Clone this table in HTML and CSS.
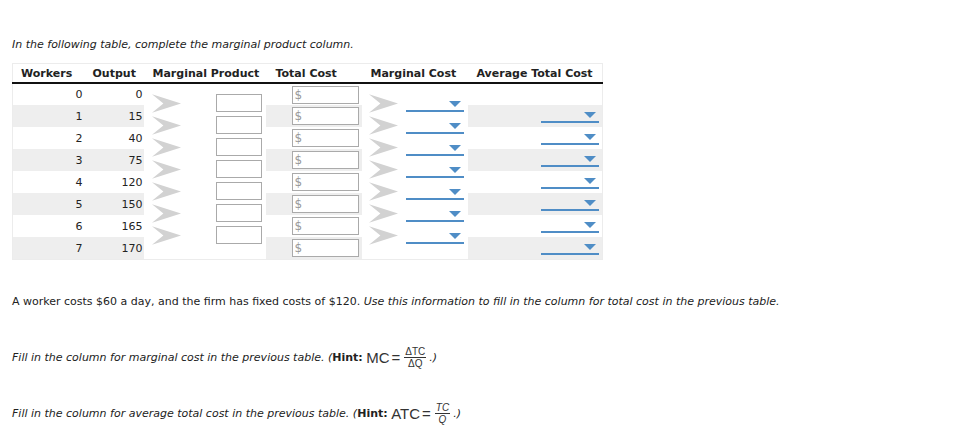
FILE: index.html
```html
<!DOCTYPE html>
<html>
<head>
<meta charset="utf-8">
<link rel="stylesheet" href="styles.css">
</head>
<body>
<p class="intro"><i>In the following table, complete the marginal product column.</i></p>
<table class="grid">
  <colgroup>
    <col class="col-w"><col class="col-o"><col class="col-mp"><col class="col-tc"><col class="col-mc"><col class="col-atc">
  </colgroup>
  <thead>
    <tr>
      <th class="h-w">Workers</th>
      <th class="h-o">Output</th>
      <th class="h-mp">Marginal Product</th>
      <th class="h-tc">Total Cost</th>
      <th class="h-mc">Marginal Cost</th>
      <th class="h-atc">Average Total Cost</th>
    </tr>
  </thead>
  <tbody>
    <tr>
      <td class="num w">0</td><td class="num o">0</td>
      <td class="steps-cell mp" rowspan="8">
        <div class="steps">
          <div class="step"><svg class="arrow" viewBox="0 0 28 20"><polygon points="0,1 28,10 0,19 11,10"/></svg><span class="box"></span></div>
          <div class="step"><svg class="arrow" viewBox="0 0 28 20"><polygon points="0,1 28,10 0,19 11,10"/></svg><span class="box"></span></div>
          <div class="step"><svg class="arrow" viewBox="0 0 28 20"><polygon points="0,1 28,10 0,19 11,10"/></svg><span class="box"></span></div>
          <div class="step"><svg class="arrow" viewBox="0 0 28 20"><polygon points="0,1 28,10 0,19 11,10"/></svg><span class="box"></span></div>
          <div class="step"><svg class="arrow" viewBox="0 0 28 20"><polygon points="0,1 28,10 0,19 11,10"/></svg><span class="box"></span></div>
          <div class="step"><svg class="arrow" viewBox="0 0 28 20"><polygon points="0,1 28,10 0,19 11,10"/></svg><span class="box"></span></div>
          <div class="step"><svg class="arrow" viewBox="0 0 28 20"><polygon points="0,1 28,10 0,19 11,10"/></svg><span class="box"></span></div>
        </div>
      </td>
      <td class="tc"><span class="money">$</span></td>
      <td class="steps-cell mc" rowspan="8">
        <div class="steps">
          <div class="step"><svg class="arrow" viewBox="0 0 28 20"><polygon points="0,1 28,10 0,19 11,10"/></svg><span class="drop"><span class="tri"></span></span></div>
          <div class="step"><svg class="arrow" viewBox="0 0 28 20"><polygon points="0,1 28,10 0,19 11,10"/></svg><span class="drop"><span class="tri"></span></span></div>
          <div class="step"><svg class="arrow" viewBox="0 0 28 20"><polygon points="0,1 28,10 0,19 11,10"/></svg><span class="drop"><span class="tri"></span></span></div>
          <div class="step"><svg class="arrow" viewBox="0 0 28 20"><polygon points="0,1 28,10 0,19 11,10"/></svg><span class="drop"><span class="tri"></span></span></div>
          <div class="step"><svg class="arrow" viewBox="0 0 28 20"><polygon points="0,1 28,10 0,19 11,10"/></svg><span class="drop"><span class="tri"></span></span></div>
          <div class="step"><svg class="arrow" viewBox="0 0 28 20"><polygon points="0,1 28,10 0,19 11,10"/></svg><span class="drop"><span class="tri"></span></span></div>
          <div class="step"><svg class="arrow" viewBox="0 0 28 20"><polygon points="0,1 28,10 0,19 11,10"/></svg><span class="drop"><span class="tri"></span></span></div>
        </div>
      </td>
      <td class="atc"></td>
    </tr>
    <tr><td class="num w">1</td><td class="num o">15</td><td class="tc"><span class="money">$</span></td><td class="atc"><span class="drop"><span class="tri"></span></span></td></tr>
    <tr><td class="num w">2</td><td class="num o">40</td><td class="tc"><span class="money">$</span></td><td class="atc"><span class="drop"><span class="tri"></span></span></td></tr>
    <tr><td class="num w">3</td><td class="num o">75</td><td class="tc"><span class="money">$</span></td><td class="atc"><span class="drop"><span class="tri"></span></span></td></tr>
    <tr><td class="num w">4</td><td class="num o">120</td><td class="tc"><span class="money">$</span></td><td class="atc"><span class="drop"><span class="tri"></span></span></td></tr>
    <tr><td class="num w">5</td><td class="num o">150</td><td class="tc"><span class="money">$</span></td><td class="atc"><span class="drop"><span class="tri"></span></span></td></tr>
    <tr><td class="num w">6</td><td class="num o">165</td><td class="tc"><span class="money">$</span></td><td class="atc"><span class="drop"><span class="tri"></span></span></td></tr>
    <tr><td class="num w">7</td><td class="num o">170</td><td class="tc"><span class="money">$</span></td><td class="atc"><span class="drop"><span class="tri"></span></span></td></tr>
  </tbody>
</table>

<p class="para p1">A worker costs $60 a day, and the firm has fixed costs of $120. <i>Use this information to fill in the column for total cost in the previous table.</i></p>

<p class="para p2"><i>Fill in the column for marginal cost in the previous table. (</i><b>Hint:</b> <span class="math">MC<span class="eq">=</span><span class="frac"><span class="num-f">ΔTC</span><span class="den-f">ΔQ</span></span></span><i>.)</i></p>

<p class="para p3"><i>Fill in the column for average total cost in the previous table. (</i><b>Hint:</b> <span class="math">ATC<span class="eq">=</span><span class="frac it"><span class="num-f">TC</span><span class="den-f">Q</span></span></span><i>.)</i></p>
</body>
</html>
```
FILE: styles.css
```css
html, body {
  margin: 0;
  padding: 0;
  background: #fff;
}
body {
  font-family: "DejaVu Sans", Verdana, sans-serif;
  font-size: 11px;
  color: #222;
  padding: 38px 0 8px 12px;
}
.intro {
  margin: 0;
  line-height: 14px;
}
.grid {
  margin-top: 11px;
  border-collapse: collapse;
  border: 1px solid #ececec;
  table-layout: fixed;
  width: 590px;
}
.col-w { width: 73px; }
.col-o { width: 58px; }
.col-mp { width: 122px; }
.col-tc { width: 96px; }
.col-mc { width: 106px; }
.col-atc { width: 135px; }
.grid th {
  font-weight: bold;
  text-align: left;
  height: 18px;
  padding: 0;
  border-bottom: 2px solid #111;
  white-space: nowrap;
  overflow: visible;
}
.h-w { padding-left: 8px !important; }
.h-o { padding-left: 7px !important; }
.h-mp { padding-left: 9px !important; }
.h-tc { padding-left: 10px !important; }
.h-mc { padding-left: 9px !important; }
.h-atc { padding-left: 9px !important; }
.grid td {
  padding: 0;
  height: 22px;
  box-sizing: border-box;
}
.grid tbody tr:nth-child(even) td {
  background: #eeeeee;
}
.grid tbody tr:first-child td.steps-cell {
  background: #fff;
}
.num {
  text-align: right;
  vertical-align: middle;
}
.w { padding-right: 3px !important; }
.o { padding-right: 1px !important; }
.steps-cell {
  vertical-align: top;
}
.steps {
  display: flex;
  flex-direction: column;
  padding-top: 8px;
}
.step {
  display: flex;
  align-items: center;
  height: 22px;
}
.arrow {
  width: 29px;
  height: 21px;
  flex: none;
  fill: #d2d2d2;
  filter: blur(0.6px);
}
.mp .arrow { margin-left: 8px; }
.box {
  display: block;
  margin-left: 35px;
  width: 46px;
  height: 18px;
  box-sizing: border-box;
  border: 1px solid #aaa;
  background: #fff;
}
.mc .arrow { margin-left: 7px; }
.drop {
  display: flex;
  justify-content: flex-end;
  align-items: flex-end;
  width: 58px;
  height: 20px;
  box-sizing: border-box;
  border-bottom: 2px solid #4f8dc6;
  padding: 0 3px 3px 0;
}
.mc .drop {
  margin-left: 8px;
  align-self: flex-start;
}
.tri {
  width: 0;
  height: 0;
  border-left: 6px solid transparent;
  border-right: 6px solid transparent;
  border-top: 6px solid #4f8dc6;
}
.tc {
  vertical-align: top;
  padding: 2px 0 0 26px !important;
}
.money {
  display: block;
  width: 67px;
  height: 18px;
  box-sizing: border-box;
  border: 1px solid #aaa;
  background: #fff;
  color: #999;
  font-size: 12px;
  line-height: 16px;
  padding-left: 2px;
}
.atc {
  vertical-align: bottom;
  padding: 0 3px 4px 0 !important;
}
.atc .drop {
  margin-left: auto;
  height: 18px;
}
.para {
  margin: 0;
  line-height: 14px;
}
.p1 { margin-top: 35px; }
.p2 { margin-top: 42px; }
.p3 { margin-top: 42px; }
.math {
  font-family: "Liberation Sans Narrow", "Liberation Sans", Arial, sans-serif;
  font-size: 15px;
  display: inline-flex;
  align-items: center;
  vertical-align: middle;
  color: #333;
  margin: -6px 0;
}
.eq { margin: 0 2px; }
.frac {
  display: inline-flex;
  flex-direction: column;
  align-items: center;
  font-family: "Liberation Sans", Arial, sans-serif;
  font-size: 10px;
  line-height: 11px;
  margin: 0 3px 0 2px;
}
.frac .num-f {
  border-bottom: 1px solid #333;
  padding: 0 1px;
  line-height: 10px;
}
.frac .den-f {
  padding: 0 2px 1px;
}
.frac.it { font-style: italic; }
```
